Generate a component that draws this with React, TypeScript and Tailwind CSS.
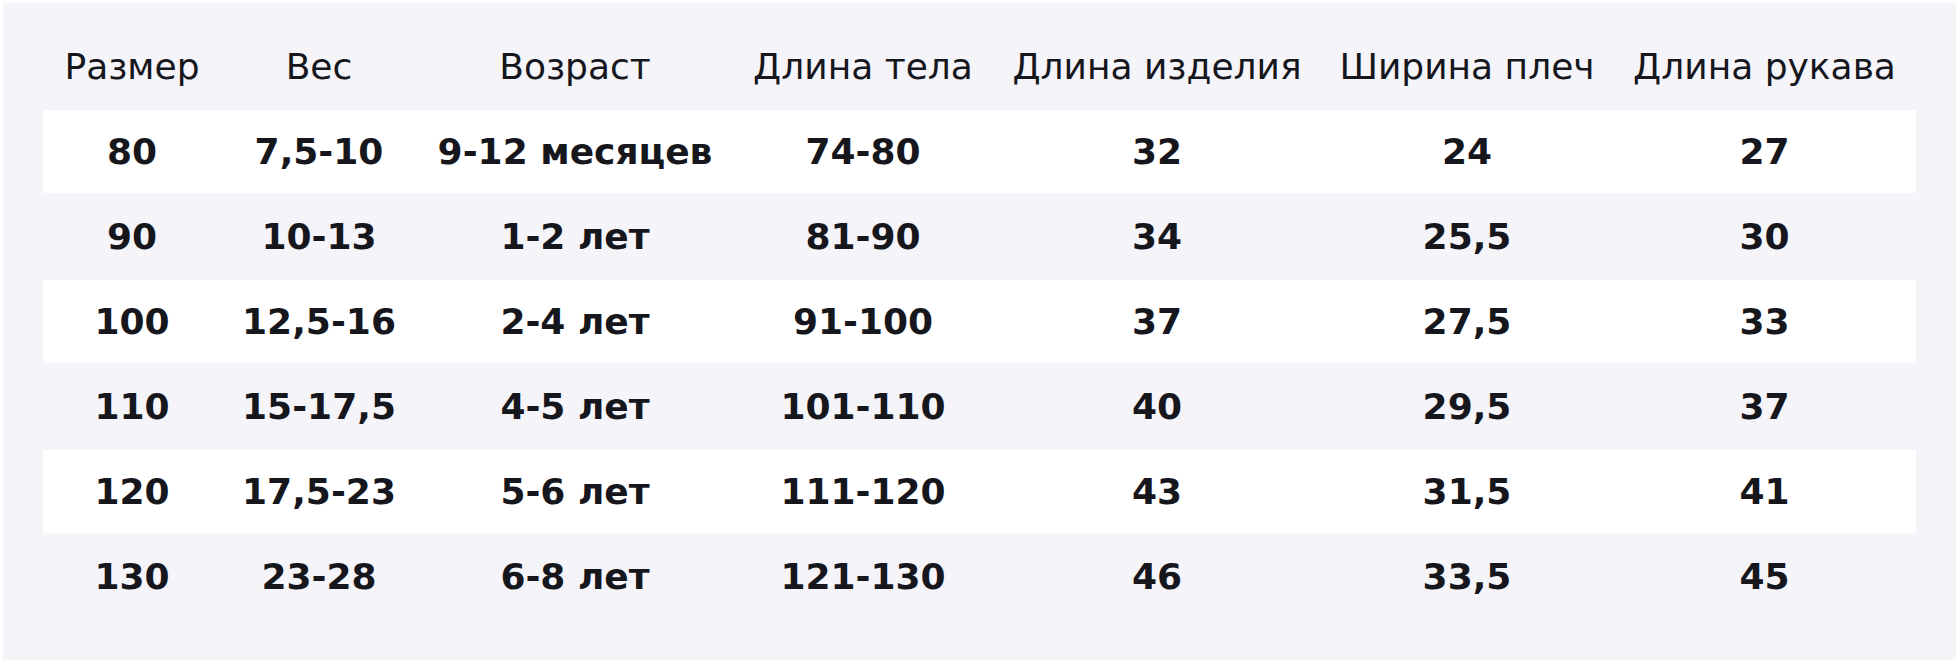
import React from 'react';

const headers = ['Размер', 'Вес', 'Возраст', 'Длина тела', 'Длина изделия', 'Ширина плеч', 'Длина рукава'];

const rows: string[][] = [
  ['80', '7,5-10', '9-12 месяцев', '74-80', '32', '24', '27'],
  ['90', '10-13', '1-2 лет', '81-90', '34', '25,5', '30'],
  ['100', '12,5-16', '2-4 лет', '91-100', '37', '27,5', '33'],
  ['110', '15-17,5', '4-5 лет', '101-110', '40', '29,5', '37'],
  ['120', '17,5-23', '5-6 лет', '111-120', '43', '31,5', '41'],
  ['130', '23-28', '6-8 лет', '121-130', '46', '33,5', '45'],
];

const cols = 'grid grid-cols-[178px_196px_316px_260px_328px_292px_303px]';

const App: React.FC = () => {
  return (
    <div className="bg-white p-[3px] w-[1959px] h-[663px]" style={{ fontFamily: "'DejaVu Sans', sans-serif" }}>
      <div className="bg-[#f4f4f9] px-[40px] pt-[40px] pb-[41px] text-[#16161d]">
        {/* Header */}
        <div className={`${cols} h-[66px] items-start`}>
          {headers.map((h) => (
            <div key={h} className="text-center text-[36px] leading-[47px] whitespace-nowrap">
              {h}
            </div>
          ))}
        </div>

        {/* Rows */}
        {rows.map((row, i) => (
          <div
            key={row[0]}
            className={`${cols} h-[85px] items-center border-y border-[#f4f4f9] ${i % 2 === 0 ? 'bg-white' : ''}`}
          >
            {row.map((cell, j) => (
              <div key={j} className="text-center text-[36px] font-bold leading-none whitespace-nowrap">
                {cell}
              </div>
            ))}
          </div>
        ))}
      </div>
    </div>
  );
};

export default App;
